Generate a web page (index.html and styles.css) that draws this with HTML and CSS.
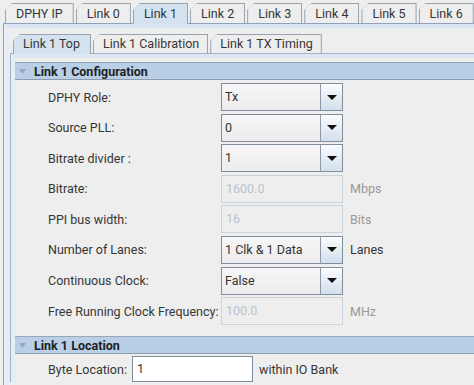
FILE: index.html
```html
<!DOCTYPE html>
<html lang="en">
<head>
    <meta charset="UTF-8">
    <title>DPHY Link 1</title>
    <link rel="stylesheet" href="styles.css">
</head>
<body>
    <div class="tabbar">
        <div class="tab"><span>DPHY IP</span></div>
        <div class="tab"><span>Link 0</span></div>
        <div class="tab active"><span>Link 1</span></div>
        <div class="tab"><span>Link 2</span></div>
        <div class="tab"><span>Link 3</span></div>
        <div class="tab"><span>Link 4</span></div>
        <div class="tab"><span>Link 5</span></div>
        <div class="tab"><span>Link 6</span></div>
    </div>
    <div class="panel">
        <div class="panel-inner">
            <div class="subtabs">
                <div class="tab small active"><span>Link 1 Top</span></div>
                <div class="tab small"><span>Link 1 Calibration</span></div>
                <div class="tab small"><span>Link 1 TX Timing</span></div>
            </div>
            <div class="subpanel">
                <div class="subpanel-inner">
                    <div class="section-head">
                        <svg width="7" height="5" viewBox="0 0 7 5"><polygon points="0,0 7,0 3.5,5" fill="#9ba7b3"/></svg>
                        Link 1 Configuration
                    </div>
                    <div class="form">
                        <label>DPHY Role:</label>
                        <div class="combo"><span>Tx</span><b class="arrow"></b></div>
                        <div></div>

                        <label>Source PLL:</label>
                        <div class="combo"><span>0</span><b class="arrow"></b></div>
                        <div></div>

                        <label>Bitrate divider :</label>
                        <div class="combo"><span>1</span><b class="arrow"></b></div>
                        <div></div>

                        <label>Bitrate:</label>
                        <div class="field disabled">1600.0</div>
                        <div class="unit dim">Mbps</div>

                        <label>PPI bus width:</label>
                        <div class="field disabled">16</div>
                        <div class="unit dim">Bits</div>

                        <label>Number of Lanes:</label>
                        <div class="combo"><span>1 Clk &amp; 1 Data</span><b class="arrow"></b></div>
                        <div class="unit">Lanes</div>

                        <label>Continuous Clock:</label>
                        <div class="combo"><span>False</span><b class="arrow"></b></div>
                        <div></div>

                        <label>Free Running Clock Frequency:</label>
                        <div class="field disabled">100.0</div>
                        <div class="unit dim">MHz</div>
                    </div>
                    <div class="section-head second">
                        <svg width="7" height="5" viewBox="0 0 7 5"><polygon points="0,0 7,0 3.5,5" fill="#9ba7b3"/></svg>
                        Link 1 Location
                    </div>
                    <div class="form location">
                        <label>Byte Location:</label>
                        <div class="field white">1</div>
                        <div class="unit">within IO Bank</div>
                    </div>
                </div>
            </div>
        </div>
    </div>
</body>
</html>
```

FILE: styles.css
```css
body {
    margin: 0;
    width: 474px;
    height: 385px;
    overflow: hidden;
    background-color: #eeeeee;
    font-family: Roboto, "Liberation Sans", sans-serif;
    font-size: 12.5px;
    color: #363636;
}
.tabbar {
    display: flex;
    align-items: flex-end;
    height: 20px;
    padding: 3px 0 0 5px;
}
.tab {
    flex-shrink: 0;
    height: 20px;
    padding: 1px 1px 0 1px;
    margin-right: 2px;
    box-sizing: border-box;
    background-color: #98a4b0;
    clip-path: polygon(7px 0, 100% 0, 100% 100%, 0 100%, 0 7px);
    white-space: nowrap;
}
.tab span {
    display: block;
    height: 100%;
    padding: 0 10px 0 10px;
    line-height: 19px;
    background-color: #eeeeee;
    clip-path: polygon(3.6px 0, 100% 0, 100% 100%, 0 100%, 0 3.6px);
}
.tab.active {
    position: relative;
    z-index: 1;
    height: 21px;
    margin-bottom: -1px;
}
.tab.active span {
    background-color: #d4e2f0;
}
.panel {
    margin-left: 3px;
    border-top: 1px solid #8ea3b9;
    border-left: 1px solid #8ea3b9;
}
.panel-inner {
    border-top: 4px solid #d9e5f1;
    border-left: 6px solid #e6edf4;
    height: 360px;
}
.subtabs {
    display: flex;
    align-items: flex-end;
    height: 25px;
    padding-left: 3px;
}
.tab.small {
    height: 19px;
}
.tab.small.active {
    height: 20px;
}
.tab.small span {
    padding: 0 8px 0 9px;
    line-height: 18px;
}
.tab.small.active span {
    padding: 0 10px 0 9px;
}
.subpanel {
    border-top: 1px solid #9db2c7;
    border-left: 1px solid #9db2c7;
}
.subpanel-inner {
    border-top: 4px solid #dfe8f2;
    border-left: 4px solid #e6edf4;
    padding-top: 4px;
}
.section-head {
    display: flex;
    align-items: center;
    gap: 8px;
    height: 16px;
    padding-left: 4px;
    background-color: #b8cfe7;
    border-top: 1px solid #98a7b6;
    border-bottom: 1px solid #8d9cab;
    font-weight: bold;
    color: #222222;
    white-space: nowrap;
}
.section-head.second {
    margin-top: 11px;
}
.form {
    display: grid;
    grid-template-columns: 173px 122px 1fr;
    grid-auto-rows: 28px;
    row-gap: 2.6px;
    align-items: center;
    padding: 3px 0 0 33px;
    white-space: nowrap;
}
.form.location {
    grid-template-columns: 84px 121px 1fr;
    grid-auto-rows: 26px;
    padding-top: 2px;
}
.dim {
    color: #999999;
}
.unit {
    padding-left: 7px;
}
.location .unit {
    padding-left: 6px;
}
.combo {
    display: flex;
    height: 28px;
    box-sizing: border-box;
    border: 1px solid #7f8d9b;
    background: linear-gradient(#f6f6f6, #ececec);
}
.combo span {
    flex: 1;
    padding-left: 3px;
    line-height: 26px;
    color: #333333;
}
.combo .arrow {
    width: 21px;
    border-left: 1px solid #8c9aa8;
    background: linear-gradient(#fbfcfd, #d2dfec);
    display: flex;
    align-items: center;
    justify-content: center;
}
.combo .arrow::after {
    content: "";
    border-left: 5px solid transparent;
    border-right: 5px solid transparent;
    border-top: 5px solid #111111;
}
.field {
    height: 28px;
    box-sizing: border-box;
    padding-left: 4px;
    line-height: 26px;
}
.field.disabled {
    border: 1px solid #c9d4df;
    color: #b7c4d1;
}
.field.white {
    height: 26px;
    line-height: 24px;
    border: 1px solid #7f8d9b;
    background-color: #ffffff;
    color: #333333;
}
```
